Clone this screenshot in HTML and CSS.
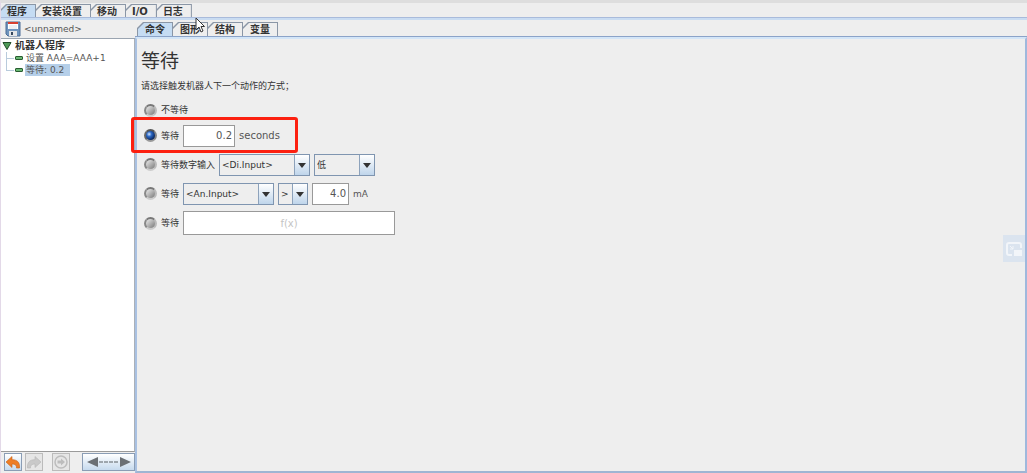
FILE: index.html
```html
<!DOCTYPE html>
<html lang="zh-CN">
<head>
    <meta charset="UTF-8">
    <meta name="viewport" content="width=device-width, initial-scale=1.0">
    <title>机器人程序</title>
    <link rel="stylesheet" href="styles.css">
</head>
<body>
    <nav class="tabs main-tabs">
        <button type="button" class="tab active"><span>程序</span></button>
        <button type="button" class="tab"><span>安装设置</span></button>
        <button type="button" class="tab"><span>移动</span></button>
        <button type="button" class="tab"><span>I/O</span></button>
        <button type="button" class="tab"><span>日志</span></button>
    </nav>

    <div class="workspace">
        <aside class="sidebar">
            <div class="file-bar">
                <svg class="disk" viewBox="0 0 16 16">
                    <path d="M1 1h14v14H3l-2-2z" fill="#6f94bd" stroke="#4c6c96"/>
                    <path d="M3 1h10v7H3z" fill="#fff"/>
                    <path d="M3 1h10v2H3z" fill="#d8402f"/>
                    <path d="M4 5h8M4 7h8" stroke="#dde0e4"/>
                    <path d="M4 10h8v5H4z" fill="#e4e6e9"/>
                    <path d="M6 11h2v3H6z" fill="#35475e"/>
                </svg>
                <span>&lt;unnamed&gt;</span>
            </div>
            <div class="tree">
                <div class="tree-root">
                    <svg class="arrow" viewBox="0 0 10 10"><path d="M1 1.500h8L5 8.500z" fill="#4f9a58" stroke="#234f2b"/></svg>
                    <span>机器人程序</span>
                </div>
                <ul>
                    <li><i class="node"></i><span>设置 AAA=AAA+1</span></li>
                    <li><i class="node"></i><span class="selected">等待: 0.2</span></li>
                </ul>
            </div>
            <div class="toolbar">
                <button type="button" class="tool" aria-label="撤销">
                    <svg viewBox="0 0 16 14"><path d="M1 7l6-5.500v3.200c5 0 8 2.300 7.500 8.300h-3c.3-3-1.500-4-4.500-4v3.500z" fill="#ee7d25" stroke="#c75f14" stroke-width=".6"/></svg>
                </button>
                <button type="button" class="tool" aria-label="重做" disabled>
                    <svg viewBox="0 0 16 14"><path d="M15 7L9 1.500v3.200c-5 0-8 2.300-7.500 8.300h3c-.3-3 1.500-4 4.500-4v3.500z" fill="#c9c9c9" stroke="#b5b5b5" stroke-width=".6"/></svg>
                </button>
                <button type="button" class="tool target" aria-label="定位" disabled>
                    <svg viewBox="0 0 16 14"><circle cx="8" cy="7" r="6" fill="none" stroke="#bdbdbd" stroke-width="1.500"/><path d="M4.500 5.500h3.500V3.500L12 7l-4 3.500v-2H4.500z" fill="#bdbdbd"/></svg>
                </button>
                <button type="button" class="tool resize" aria-label="调整宽度">
                    <svg viewBox="0 0 46 12"><path d="M1 6l11-5v10zM45 6L34 1v10z" fill="#6b7075"/><path d="M13 6h20" stroke="#5b6065" stroke-dasharray="4 1"/></svg>
                </button>
            </div>
        </aside>

        <main class="content">
            <nav class="tabs sub-tabs">
                <button type="button" class="tab active"><span>命令</span></button>
                <button type="button" class="tab"><span>图形</span></button>
                <button type="button" class="tab"><span>结构</span></button>
                <button type="button" class="tab"><span>变量</span></button>
            </nav>
            <form class="panel">
                <h1>等待</h1>
                <p>请选择触发机器人下一个动作的方式；</p>

                <div class="row first">
                    <input type="radio" name="wait" id="none">
                    <label for="none">不等待</label>
                </div>
                <div class="row">
                    <input type="radio" name="wait" id="time" checked>
                    <label for="time">等待</label>
                    <input type="text" class="seconds" value="0.2" aria-label="秒数">
                    <span class="unit">seconds</span>
                    <div class="highlight"></div>
                </div>
                <div class="row">
                    <input type="radio" name="wait" id="digital">
                    <label for="digital">等待数字输入</label>
                    <span class="combo di"><select aria-label="数字输入"><option>&lt;Di.Input&gt;</option></select></span>
                    <span class="combo level"><select aria-label="电平"><option>低</option></select></span>
                </div>
                <div class="row">
                    <input type="radio" name="wait" id="analog">
                    <label for="analog">等待</label>
                    <span class="combo an"><select aria-label="模拟输入"><option>&lt;An.Input&gt;</option></select></span>
                    <span class="combo op"><select aria-label="比较"><option>&gt;</option></select></span>
                    <input type="text" class="current" value="4.0" aria-label="电流">
                    <span class="unit small">mA</span>
                </div>
                <div class="row last">
                    <input type="radio" name="wait" id="expression">
                    <label for="expression">等待</label>
                    <input type="text" class="formula" placeholder="f(x)" aria-label="表达式">
                </div>
            </form>
        </main>
    </div>

    <button type="button" class="float-button" aria-label="画中画">
        <svg viewBox="0 0 18 16"><path d="M7 14H4q-2 0-2-2V4q0-2 2-2h10q2 0 2 2v3" fill="none" stroke="#f2f5f9" stroke-width="2"/><path d="M9 9h8v6H9z" fill="#f2f5f9"/><path d="M5 5l3 3M8 5v3H5" fill="none" stroke="#f2f5f9"/></svg>
    </button>
    <svg class="cursor" viewBox="0 0 10 16"><path d="M1 1v12l3-3 2 5 2-1-2-4.500h3.500z" fill="#fff" stroke="#333"/></svg>
</body>
</html>
```

FILE: styles.css
```css
* {
    box-sizing: border-box;
}
body {
    display: flex;
    flex-direction: column;
    height: 100vh;
    margin: 0;
    overflow: hidden;
    position: relative;
    background-color: #eee;
    border-top: 3px solid #dedede;
    border-left: 1px solid #e3d9e8;
    color: #333;
    font-family: "DejaVu Sans", "Noto Sans CJK SC", sans-serif;
    font-size: 9px;
    line-height: 12px;
}
button, input, select {
    margin: 0;
    padding: 0;
    color: inherit;
    font: inherit;
}
svg {
    display: block;
}

/* tabs */
.tabs {
    display: flex;
    border-bottom: 1px solid #8ba3c8;
}
.main-tabs {
    margin-left: -1px;
    padding-top: 1px;
    border-bottom-color: #a9bbdb;
    box-shadow: 0 2px 0 #c9dcf2;
}
.tab {
    height: 14px;
    margin-right: -1px;
    padding: 1px 1px 0;
    border: none;
    background-color: #8a96a6;
    clip-path: polygon(6px 0, 100% 0, 100% 100%, 0 100%, 0 6px);
    font-size: 10px;
    font-weight: bold;
    line-height: 13px;
}
.tab span {
    display: block;
    height: 13px;
    padding: 0 7px;
    background-color: #eee;
    clip-path: polygon(6px 0, 100% 0, 100% 100%, 0 100%, 0 6px);
}
.main-tabs .tab {
    height: 13px;
}
.main-tabs .tab span {
    padding: 0 8px 0 6px;
}
.tab.active span {
    background-color: #c5dcf3;
}

.workspace {
    display: flex;
    flex: 1;
    min-height: 0;
    padding-top: 2px;
}

/* program tree */
.sidebar {
    display: flex;
    flex-direction: column;
    width: 134px;
}
.file-bar {
    display: flex;
    align-items: center;
    gap: 3px;
    height: 19px;
    padding-left: 4px;
    border-bottom: 1px solid #9aa4b0;
    color: #555;
}
.disk {
    width: 16px;
    height: 16px;
}
.tree {
    flex: 1;
    border-right: 1px solid #aab0b8;
    border-bottom: 1px solid #9a9a9a;
    background-color: #fff;
}
.tree-root {
    display: flex;
    align-items: center;
    gap: 3px;
    height: 13px;
    padding-left: 1px;
    font-size: 10px;
    font-weight: bold;
}
.arrow {
    width: 10px;
    height: 10px;
}
.tree ul {
    margin: 0 0 0 5px;
    padding: 0;
    list-style: none;
}
.tree li {
    display: flex;
    align-items: center;
    height: 12px;
    color: #555;
    background: linear-gradient(#b9cbdc, #b9cbdc) 0 6px / 8px 1px no-repeat,
        linear-gradient(#b9cbdc, #b9cbdc) 0 0 / 1px 100% no-repeat;
}
.tree li:last-child {
    background-size: 8px 1px, 1px 6px;
}
.node {
    width: 8px;
    height: 4px;
    margin: 0 2px 0 9px;
    border: 1px solid #285c30;
    border-radius: 1px;
    background-color: #69b873;
}
.tree li span {
    padding: 0 1px;
    white-space: nowrap;
}
.tree li .selected {
    padding-right: 6px;
    background-color: #b5cfe9;
}
.toolbar {
    display: flex;
    align-items: center;
    height: 21px;
    padding: 0 0 1px 3px;
}
.tool {
    display: flex;
    align-items: center;
    justify-content: center;
    width: 18px;
    height: 18px;
    margin-right: 3px;
    border: 1px solid #8a9db5;
    background: linear-gradient(#fff, #c6daee);
}
.tool:disabled {
    border-color: #bbb;
    background: #e6e6e6;
}
.tool svg {
    width: 16px;
    height: 14px;
}
.tool.target {
    margin: 0 12px 0 6px;
}
.tool.resize {
    flex: 1;
    margin: 0;
}
.tool.resize svg {
    width: 46px;
    height: 12px;
}

/* command panel */
.content {
    display: flex;
    flex: 1;
    flex-direction: column;
    padding-top: 2px;
}
.sub-tabs {
    padding-left: 2px;
}
.panel {
    flex: 1;
    padding: 12px 0 0 4px;
    border: 2px solid #a9c1e2;
    border-top-color: #d3e5f7;
    border-right-color: #9fb8dc;
    border-bottom-color: #9eb5d3;
}
h1 {
    margin: 0;
    font-size: 19px;
    font-weight: normal;
    line-height: 20px;
}
p {
    margin: 9px 0 7px;
}
.row {
    display: flex;
    align-items: center;
    position: relative;
    height: 29px;
    padding-left: 3px;
}
.row.first {
    height: 22px;
}
.row.last {
    height: 30px;
}
.row label {
    margin: 0 4px;
}
input[type="radio"] {
    appearance: none;
    width: 13px;
    height: 13px;
    border: 2px solid #777;
    border-color: #777 #bbb #ccc #888;
    border-radius: 50%;
    background: linear-gradient(135deg, #eee, #777);
}
input[type="radio"]:checked {
    border-color: #555 #888 #999 #666;
    background: radial-gradient(circle at 35% 35%, #d5e8ff 0, #2b67c4 30%, #0a2459 75%);
}
input[type="text"] {
    height: 22px;
    padding: 0 2px;
    border: 1px solid #999;
    border-radius: 0;
    background-color: #fff;
    color: #555;
    font-size: 10px;
    text-align: right;
}
input.seconds {
    width: 52px;
}
input.current {
    width: 37px;
}
input.formula {
    width: 212px;
    height: 24px;
    text-align: center;
}
input::placeholder {
    color: #c4c4c4;
}
.unit {
    margin-left: 4px;
    color: #555;
    font-size: 10px;
}
.unit.small {
    font-size: 9px;
}
.combo {
    display: block;
    position: relative;
    height: 22px;
    margin-right: 4px;
    border: 1px solid #7f95b0;
}
.combo select {
    display: block;
    appearance: none;
    width: 100%;
    height: 20px;
    padding: 0 16px 0 2px;
    border: none;
    border-radius: 0;
    background: linear-gradient(#8da2bb, #8da2bb) right 14px top / 1px 100% no-repeat,
        linear-gradient(#fff, #bfd5eb) right / 14px 100% no-repeat, #eee;
}
.combo::after {
    content: "";
    position: absolute;
    top: 8px;
    right: 3px;
    border: 4px solid transparent;
    border-top: 5px solid #333;
    border-bottom: none;
    pointer-events: none;
}
.combo.di {
    width: 91px;
}
.combo.level {
    width: 61px;
}
.combo.an {
    width: 91px;
}
.combo.op {
    width: 30px;
}

/* overlays */
.highlight {
    position: absolute;
    top: -4px;
    left: -10px;
    width: 167px;
    height: 36px;
    border: 3px solid #fc2010;
    border-radius: 3px;
    pointer-events: none;
}
.float-button {
    position: absolute;
    top: 232px;
    right: 2px;
    width: 22px;
    height: 27px;
    border: none;
    background-color: #dbe4ef;
}
.float-button svg {
    width: 18px;
    height: 16px;
    margin: 0 auto;
}
.cursor {
    position: absolute;
    top: 14px;
    left: 194px;
    width: 10px;
    height: 16px;
}
```
